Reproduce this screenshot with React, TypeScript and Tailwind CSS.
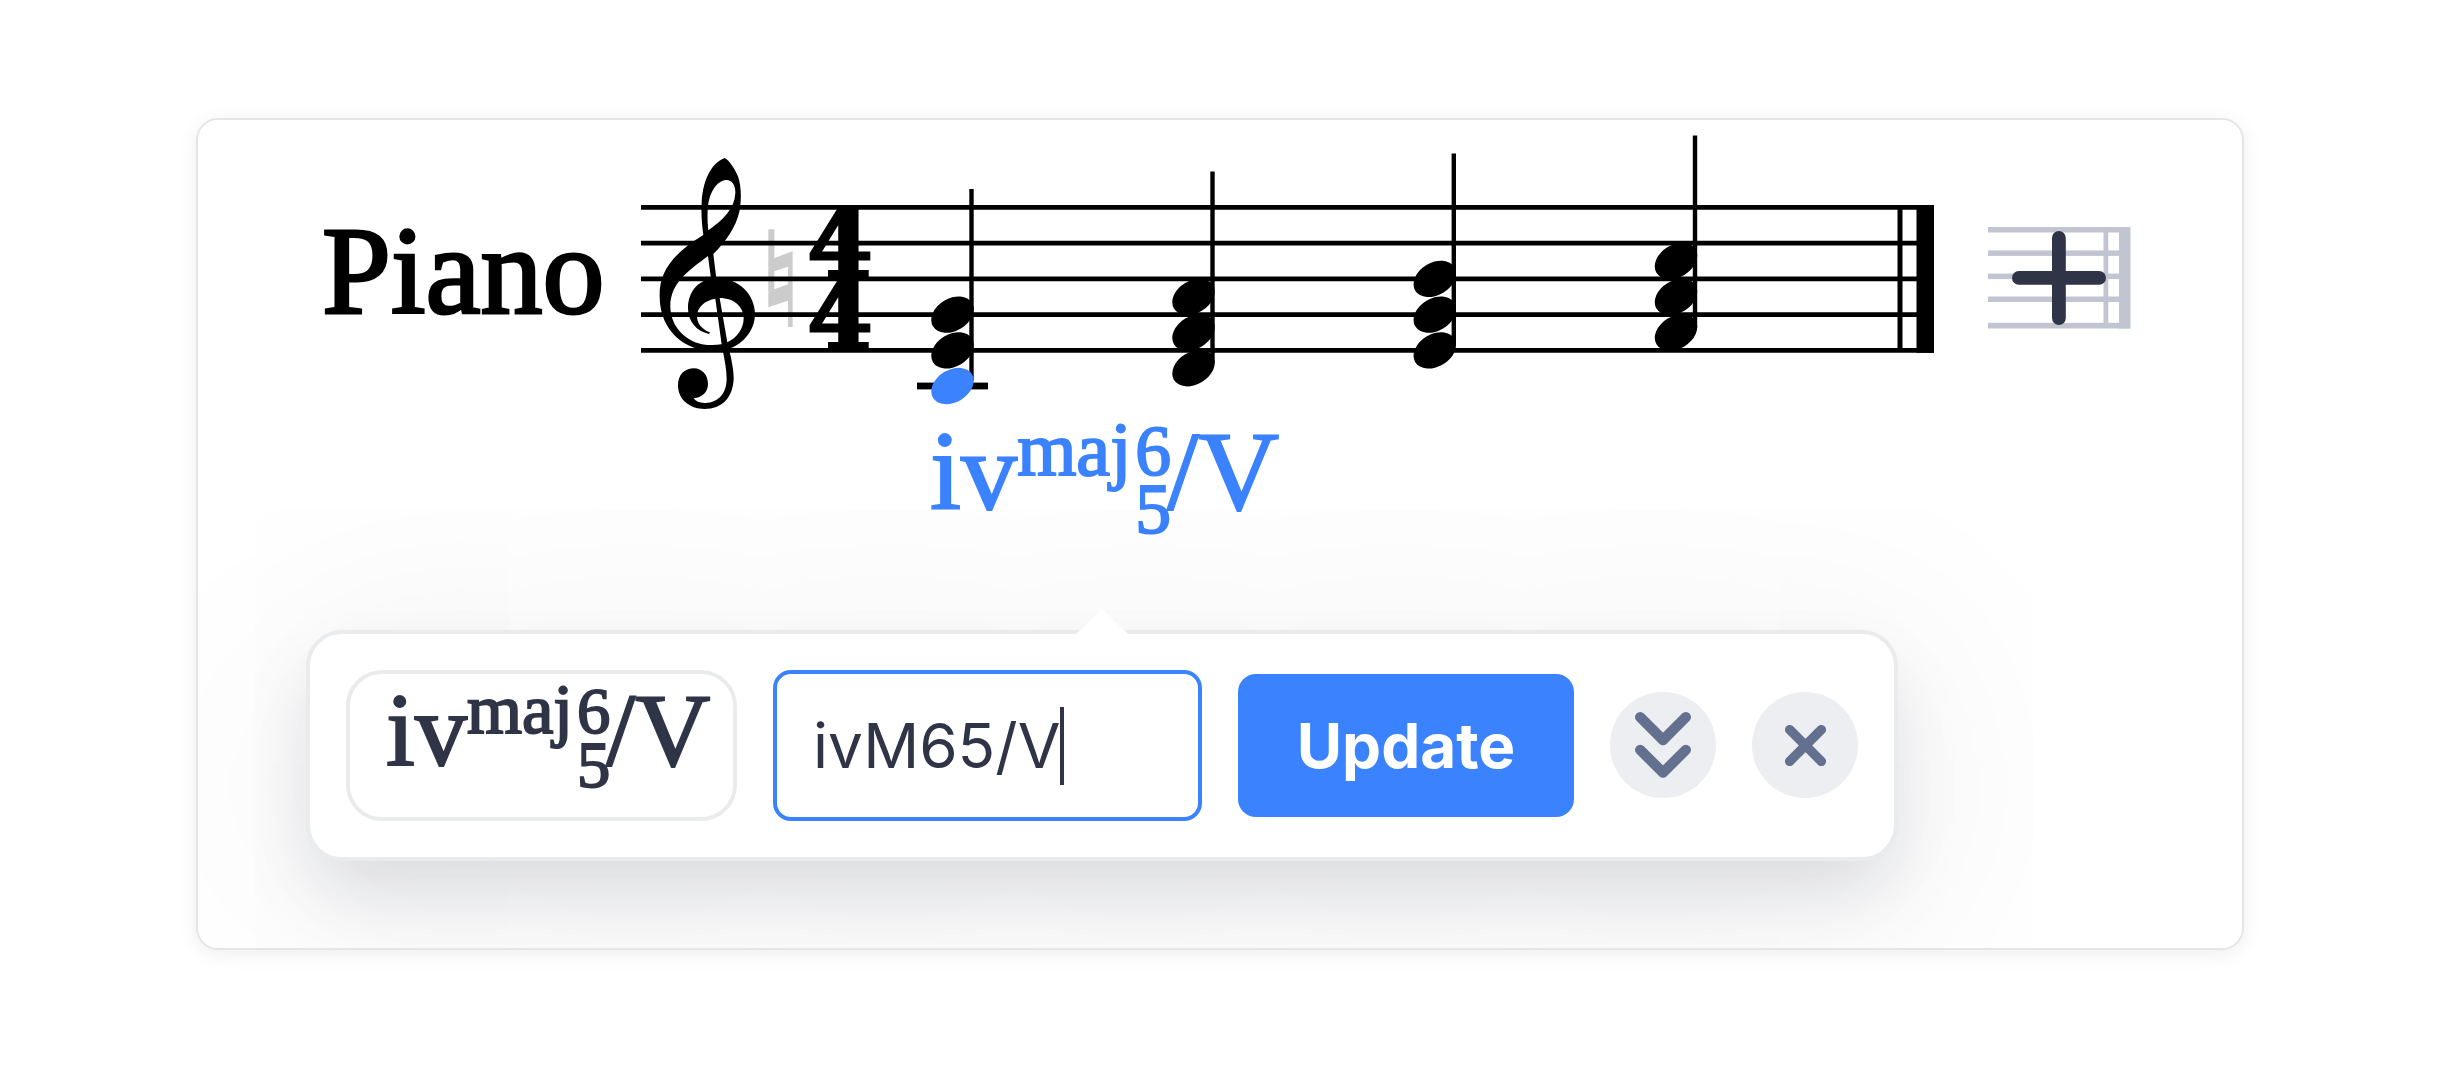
import { useState } from "react";

const NOTE_BLUE = "#3b82ff";

const LINE_YS = [207.4, 243.1, 278.9, 314.6, 350.4];

interface Chord {
  x: number;
  stemTop: number;
  notes: { y: number; selected?: boolean }[];
}

const chords: Chord[] = [
  {
    x: 952.5,
    stemTop: 189,
    notes: [{ y: 314.6 }, { y: 350.4 }, { y: 386, selected: true }],
  },
  { x: 1193.5, stemTop: 171.5, notes: [{ y: 296.8 }, { y: 332.5 }, { y: 368.2 }] },
  { x: 1434.8, stemTop: 153.5, notes: [{ y: 278.9 }, { y: 314.6 }, { y: 350.4 }] },
  { x: 1676, stemTop: 135.5, notes: [{ y: 261 }, { y: 296.8 }, { y: 332.5 }] },
];

const TrebleClef = () => (
  <g transform="translate(620 140) scale(0.3333)">
    <path
      fillRule="evenodd"
      d="M314 54C326 58 347 90 355 112C364 140 365 180 358 215C348 262 316 306 280 342L289 415C350 412 405 460 405 522C405 570 372 610 327 627C335 660 342 695 341 718C338 775 305 807 254 807C208 807 174 778 174 736C174 706 192 686 219 685C246 684 264 705 264 732C264 756 246 773 221 775C228 784 240 790 256 789C297 787 320 758 320 716C320 690 314 660 308 630C220 645 120 590 119 470C117 400 152 345 250 285C246 255 243 225 245 190C247 130 270 70 314 54ZM318 120C292 122 266 155 263 210C262 235 263 255 265 271C310 240 344 205 346 160C347 138 338 119 318 120ZM264 348C205 392 150 430 151 500C152 570 215 628 305 613L286 476C255 481 230 502 231 530C232 552 247 568 270 577L267 582C230 574 204 545 204 505C204 455 235 422 273 416ZM299 474L322 607C352 593 371 565 371 535C371 500 342 474 299 474Z"
    />
  </g>
);

const Score = () => (
  <svg viewBox="641 120 1293 295" className="w-full block" aria-hidden="true">
    {/* Natural hint before the time signature */}
    <path
      fill="#cccccc"
      fillRule="evenodd"
      transform="translate(620 140) scale(0.3333)"
      d="M445 268H463V354L518 334V561H504V482L445 502ZM463 394V448L504 433V380Z"
    />

    {LINE_YS.map((y) => (
      <line key={y} x1="641" x2="1934" y1={y} y2={y} stroke="#000" strokeWidth="4.8" />
    ))}
    <rect x="1897.5" y="207" width="5" height="143" />
    <rect x="1916.5" y="205" width="18" height="147.8" />

    <TrebleClef />

    {/* Time signature */}
    <g
      fontFamily="'DejaVu Serif', serif"
      fontWeight="700"
      fontSize="94"
      textAnchor="middle"
      stroke="#000"
      strokeWidth="3"
    >
      <text x="840" y="277">4</text>
      <text x="840" y="349">4</text>
    </g>

    {/* Ledger line */}
    <rect x="917" y="382.6" width="71" height="6.8" />

    {chords.map((chord) => (
      <g key={chord.x}>
        <line
          x1={chord.x + 19}
          x2={chord.x + 19}
          y1={chord.stemTop}
          y2={chord.notes[2].y - 5}
          stroke="#000"
          strokeWidth="4.4"
        />
        {chord.notes.map((note) => (
          <ellipse
            key={note.y}
            rx="22.8"
            ry="16.2"
            fill={note.selected ? NOTE_BLUE : "#000"}
            transform={`translate(${chord.x} ${note.y}) rotate(-31)`}
          />
        ))}
      </g>
    ))}
  </svg>
);

const AddMeasureIcon = () => (
  <svg viewBox="0 0 144 104" className="w-full block" aria-hidden="true">
    <g fill="#c1c5d2">
      <rect x="1" y="1" width="142" height="5.5" />
      <rect x="1" y="24.4" width="142" height="5.5" />
      <rect x="1" y="47.6" width="142" height="5.5" />
      <rect x="1" y="70.5" width="142" height="5.5" />
      <rect x="1" y="96.8" width="142" height="5.7" />
      <rect x="116.5" y="1" width="4.8" height="101" />
      <rect x="132" y="1" width="11.5" height="101.5" />
    </g>
    <g fill="#2f3447">
      <rect x="25" y="45" width="94" height="13.8" rx="6.9" />
      <rect x="65" y="5" width="13.8" height="94" rx="6.9" />
    </g>
  </svg>
);

// Roman numeral with its quality and stacked figures
const RomanNumeral = () => (
  <span className="flex items-baseline [-webkit-text-stroke:2px]">
    <span>iv</span>
    <span className="relative bottom-[0.45em] text-[0.68em]">maj</span>
    <span className="relative bottom-[0.47em] ml-1 flex flex-col text-[0.64em] leading-[0.8]">
      <span>6</span>
      <span>5</span>
    </span>
    <span className="-ml-1">/V</span>
  </span>
);

const App = () => {
  const [value, setValue] = useState("ivM65/V");

  return (
    <main className="min-h-screen bg-white px-[196px] pt-[118px] pb-[120px] font-['Inter',sans-serif] text-[#2f3447]">
      <section className="overflow-hidden rounded-[22px] border-2 border-black/10 bg-clip-padding pb-[87px] shadow-[0_4px_20px_rgba(0,0,0,0.07)]">
        {/* Staff row */}
        <div className="flex items-start pl-[124px] pr-[111px]">
          <h1 className="mt-[90px] w-[319px] shrink-0 font-['Liberation_Serif',serif] text-[124px] leading-none text-black [-webkit-text-stroke:3px]">
            Piano
          </h1>
          <div className="min-w-0 flex-1">
            <Score />
          </div>
          <button
            type="button"
            aria-label="Add measure"
            className="ml-[53px] mt-[106px] w-36 shrink-0 cursor-pointer"
          >
            <AddMeasureIcon />
          </button>
        </div>

        {/* Analysis under the first chord */}
        <div className="ml-[732px] font-['Liberation_Serif',serif] text-[112px] leading-none text-[#3b82ff]">
          <RomanNumeral />
        </div>

        {/* Popup editor */}
        <form
          onSubmit={(e) => e.preventDefault()}
          className="relative ml-[108px] mt-[58px] flex w-fit items-center gap-9 rounded-[36px] border-4 border-[#eaebec] bg-white p-9 shadow-[0_36px_240px_20px_rgba(16,24,40,0.07),0_36px_72px_-8px_rgba(16,24,40,0.12)]"
        >
          <svg
            viewBox="0 0 52 26"
            className="absolute -top-[26px] left-1/2 w-[52px] -translate-x-1/2"
            aria-hidden="true"
          >
            <path fill="#fff" d="M0 26L23.5 3q2.5-2 5 0L52 26Z" />
          </svg>

          <div className="h-[151px] w-[391px] rounded-[36px] border-4 border-[#eaebec] pl-9 pt-1 font-['Liberation_Serif',serif] text-[104px] leading-none">
            <RomanNumeral />
          </div>

          <div className="relative">
            <input
              type="text"
              aria-label="Roman numeral"
              value={value}
              onChange={(e) => setValue(e.target.value)}
              className="block h-[151px] w-[429px] rounded-[18px] border-4 border-[#3b82ff] bg-white px-9 text-[62px] caret-transparent outline-none"
            />
            <span className="absolute left-[287px] top-[37px] h-[78px] w-1 bg-[#2f3447]" />
          </div>

          <button
            type="submit"
            className="h-[143px] w-[336px] cursor-pointer rounded-[18px] bg-[#3b82ff] text-[62px] font-bold text-white"
          >
            Update
          </button>

          <button
            type="button"
            aria-label="More options"
            className="flex size-[106px] cursor-pointer items-center justify-center rounded-full bg-[#edeef2]"
          >
            <svg
              viewBox="0 0 54 64"
              className="w-14"
              fill="none"
              stroke="#64708f"
              strokeWidth="10"
              strokeLinecap="round"
              strokeLinejoin="round"
            >
              <path d="M5 5L27 27L49 5M5 36.5L27 58.5L49 36.5" />
            </svg>
          </button>

          <button
            type="button"
            aria-label="Close"
            className="flex size-[106px] cursor-pointer items-center justify-center rounded-full bg-[#edeef2]"
          >
            <svg
              viewBox="0 0 41 41"
              className="w-[41px]"
              fill="none"
              stroke="#64708f"
              strokeWidth="9.5"
              strokeLinecap="round"
            >
              <path d="M4.7 4.7L36.3 36.3M36.3 4.7L4.7 36.3" />
            </svg>
          </button>
        </form>
      </section>
    </main>
  );
};

export default App;
